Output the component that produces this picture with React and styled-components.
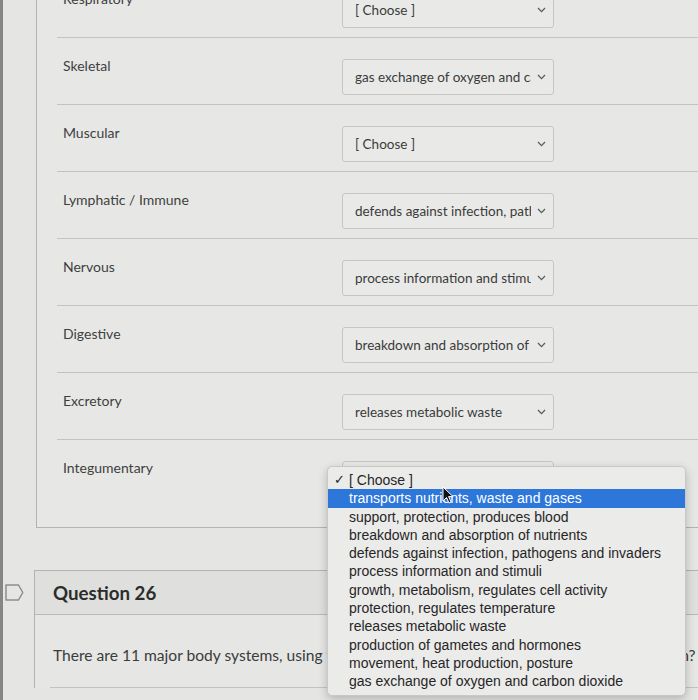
import React from "react";
import styled, { createGlobalStyle } from "styled-components";

const Global = createGlobalStyle`
  html, body { margin: 0; padding: 0; background: #e5e6e4; overflow: hidden; }
  body { font-family: Lato, "Open Sans", sans-serif; }
`;

const Frame = styled.div`
  position: relative;
  height: 700px;
  overflow: hidden;
  border-left: 3px solid #858685;
  background: #e5e6e4;
`;

const QuizCard = styled.div`
  margin-left: 33px;
  margin-top: -29px;
  width: 760px;
  border-left: 1px solid #b3b4b2;
  border-bottom: 1px solid #b3b4b2;
  background: #e7e8e6;
`;

const Row = styled.div`
  display: flex;
  margin-left: 20px;
  height: ${(p) => (p.$last ? 87 : 66)}px;
  border-bottom: ${(p) => (p.$last ? "none" : "1px solid #c3c4c2")};
`;

const Label = styled.div`
  width: 279px;
  padding-left: 6px;
  padding-top: 18px;
  font-size: 14px;
  line-height: 20px;
  color: #3e3f3f;
`;

const Select = styled.div`
  margin-top: 21px;
  width: 198px;
  height: 34px;
  display: flex;
  align-items: center;
  border: 1px solid #c6c7c5;
  border-radius: 3px;
  background: #e9eae8;
  padding-left: 12px;
  box-sizing: content-box;
`;

const Value = styled.span`
  flex: 1;
  overflow: hidden;
  white-space: nowrap;
  font-size: 13.5px;
  color: #3a3b3b;
`;

const Chevron = styled.svg`
  width: 9px;
  height: 6px;
  margin: 0 7px 0 6px;
  flex: none;
`;

const QuestionWrap = styled.div`
  display: flex;
  margin-top: 42px;
`;

const Flag = styled.svg`
  width: 19px;
  height: 17px;
  margin: 14px 10px 0 2px;
  flex: none;
`;

const QuestionCard = styled.div`
  width: 760px;
  border-left: 1px solid #b3b4b2;
  border-top: 1px solid #b3b4b2;
`;

const QHeader = styled.div`
  height: 43px;
  display: flex;
  align-items: center;
  padding-left: 18px;
  background: #dfe0de;
  border-bottom: 1px solid #b9bab8;
  font-size: 18.7px;
  font-weight: 700;
  color: #2b2c2c;
`;

const QBody = styled.div`
  padding: 28px 0 0 18px;
  background: #e6e7e5;
`;

const QText = styled.div`
  font-size: 15.6px;
  line-height: 24px;
  color: #3a3b3b;
  white-space: nowrap;
  padding-bottom: 20px;
  margin-left: -3px;
  padding-left: 3px;
  border-bottom: 1px solid #c3c4c2;
`;

const Menu = styled.div`
  position: absolute;
  left: 324px;
  top: 466px;
  width: 357px;
  padding: 4px 0;
  background: #ebebea;
  border: 1px solid #c8c8c7;
  border-radius: 5px;
  box-shadow: 0 3px 10px rgba(0, 0, 0, 0.22);
  font-family: "Liberation Sans", Arial, sans-serif;
  font-size: 14px;
`;

const Item = styled.div`
  position: relative;
  height: 18.3px;
  line-height: 18.3px;
  padding-left: 21px;
  white-space: nowrap;
  color: ${(p) => (p.$active ? "#ffffff" : "#262626")};
  background: ${(p) => (p.$active ? "#2d77db" : "transparent")};
`;

const Check = styled.span`
  position: absolute;
  left: 6px;
  top: 0;
  font-size: 13px;
`;

const Cursor = styled.svg`
  position: absolute;
  left: 114px;
  top: -3px;
  width: 12px;
  height: 18px;
`;

const rows = [
  ["Respiratory", "[ Choose ]"],
  ["Skeletal", "gas exchange of oxygen and carbon dioxide"],
  ["Muscular", "[ Choose ]"],
  ["Lymphatic / Immune", "defends against infection, pathogens and invaders"],
  ["Nervous", "process information and stimuli"],
  ["Digestive", "breakdown and absorption of nutrients"],
  ["Excretory", "releases metabolic waste"],
  ["Integumentary", "[ Choose ]"],
];

const options = [
  "transports nutrients, waste and gases",
  "support, protection, produces blood",
  "breakdown and absorption of nutrients",
  "defends against infection, pathogens and invaders",
  "process information and stimuli",
  "growth, metabolism, regulates cell activity",
  "protection, regulates temperature",
  "releases metabolic waste",
  "production of gametes and hormones",
  "movement, heat production, posture",
  "gas exchange of oxygen and carbon dioxide",
];

export default function App() {
  return (
    <>
      <Global />
      <Frame>
        <QuizCard>
          {rows.map(([label, value], i) => (
            <Row key={label} $last={i === rows.length - 1}>
              <Label>{label}</Label>
              <Select>
                <Value>{value}</Value>
                <Chevron viewBox="0 0 9 6">
                  <path d="M1 1 L4.5 4.6 L8 1" fill="none" stroke="#5a5b5b" strokeWidth="1.3" />
                </Chevron>
              </Select>
            </Row>
          ))}
        </QuizCard>
        <QuestionWrap>
          <Flag viewBox="0 0 19 17">
            <path d="M1 1 H13.5 L17.8 8.5 L13.5 16 H1 Z" fill="none" stroke="#8c8d8c" strokeWidth="1.5" strokeLinejoin="round" />
          </Flag>
          <QuestionCard>
            <QHeader>Question 26</QHeader>
            <QBody>
              <QText>There are 11 major body systems, using the drop-downs, match each system with its function?</QText>
            </QBody>
          </QuestionCard>
        </QuestionWrap>
        <Menu>
          <Item>
            <Check>✓</Check>[ Choose ]
          </Item>
          {options.map((o, i) => (
            <Item key={o} $active={i === 0}>
              {o}
              {i === 0 && (
                <Cursor viewBox="0 0 12 18">
                  <path d="M1 1 L1 15 L4.5 11.5 L7 17 L9 16 L6.6 10.6 L11 10.6 Z" fill="#111" stroke="#fff" strokeWidth="1" />
                </Cursor>
              )}
            </Item>
          ))}
        </Menu>
      </Frame>
    </>
  );
}
